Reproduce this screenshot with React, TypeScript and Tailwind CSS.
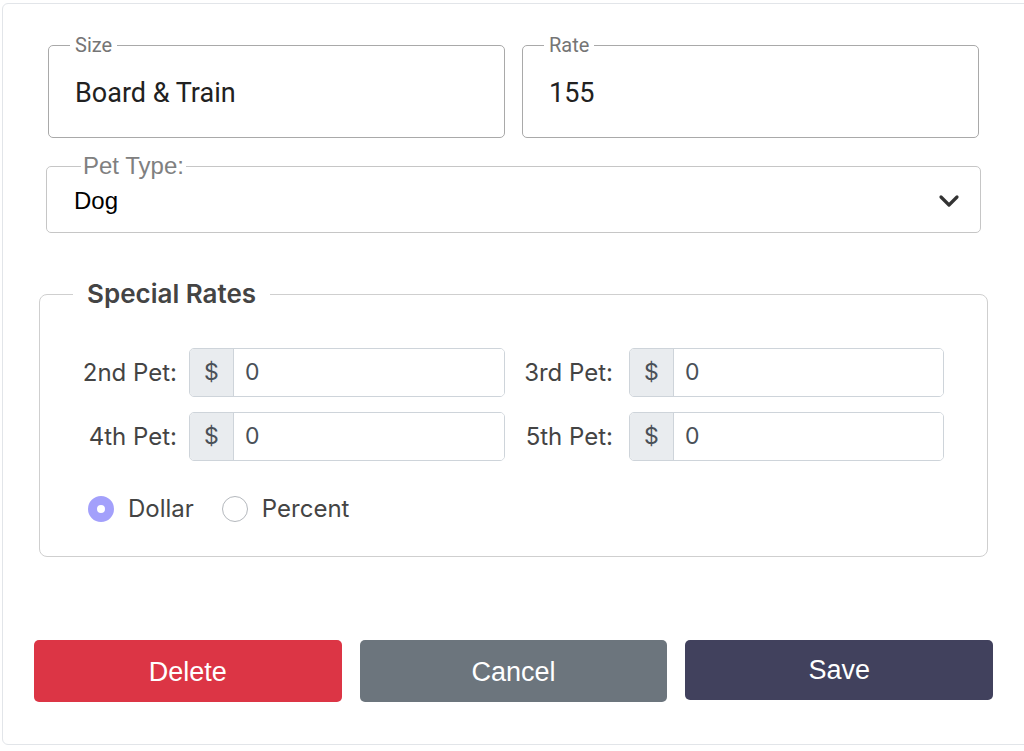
import React from 'react'

function PetRate({ label, value, gap }: { label: string; value: string; gap: string }) {
  return (
    <div className="flex items-center">
      <span className={`${gap} w-[96px] shrink-0 text-right text-[24px] text-[#444]`}>
        {label}
      </span>
      <div className="flex h-[49px] flex-1 overflow-hidden rounded-[5px] border border-[#ced4da]">
        <span className="flex w-[44px] items-center justify-center border-r border-[#ced4da] bg-[#e9ecef] text-[23px] text-[#495057]">
          $
        </span>
        <span className="flex flex-1 items-center bg-white pl-[11px] text-[23px] text-[#495057]">
          {value}
        </span>
      </div>
    </div>
  )
}

export default function App() {
  return (
    <div className="h-[751px] w-[1024px] overflow-hidden bg-white font-['Inter',sans-serif]">
      <div className="ml-[2px] mt-[3px] flex h-[742px] w-[1040px] flex-col items-start rounded-[6px] border border-[#e2e5e9] bg-white">
        <div className="ml-[45px] mt-[31px] flex w-[931px] gap-[17px] font-['Roboto',sans-serif]">
          <fieldset className="flex-1 rounded-[5px] border border-[#a9a9a9] px-[26px]">
            <legend className="-ml-[5px] px-[5px] text-[20px] leading-[20px] text-[#757575]">
              Size
            </legend>
            <div className="pb-[30px] pt-[24px] text-[27px] leading-[28px] text-[#212121]">
              Board &amp; Train
            </div>
          </fieldset>
          <fieldset className="flex-1 rounded-[5px] border border-[#a9a9a9] px-[26px]">
            <legend className="-ml-[5px] px-[5px] text-[20px] leading-[20px] text-[#757575]">
              Rate
            </legend>
            <div className="pb-[30px] pt-[24px] text-[27px] leading-[28px] text-[#212121]">
              155
            </div>
          </fieldset>
        </div>

        <fieldset className="ml-[43px] mt-[16px] w-[935px] rounded-[5px] border border-[#c6c6c6] pl-[27px] pr-[20px] font-['Liberation_Sans',sans-serif]">
          <legend className="ml-[7px] px-[2px] text-[24px] leading-[24px] text-[#808080]">
            Pet Type:
          </legend>
          <div className="flex items-center justify-between pb-[18px] pt-[10px]">
            <span className="text-[24px] leading-[26px] text-black">Dog</span>
            <svg width="22" height="14" viewBox="0 0 22 14" className="text-[#333]">
              <polyline
                points="3,3 11,11 19,3"
                fill="none"
                stroke="currentColor"
                strokeWidth="3.2"
                strokeLinecap="round"
                strokeLinejoin="round"
              />
            </svg>
          </div>
        </fieldset>

        <fieldset className="ml-[36px] mt-[46px] w-[949px] rounded-[8px] border border-[#cfcfcf] pl-[41px] pr-[43px]">
          <legend className="-ml-[8px] px-[14px] text-[26px] font-semibold leading-[30px] text-[#444]">
            Special Rates
          </legend>
          <div className="mt-[39px] grid grid-cols-[424px_1fr] gap-x-[12px] gap-y-[15px]">
            <PetRate label="2nd Pet:" value="0" gap="mr-[12px]" />
            <PetRate label="3rd Pet:" value="0" gap="mr-[16px]" />
            <PetRate label="4th Pet:" value="0" gap="mr-[12px]" />
            <PetRate label="5th Pet:" value="0" gap="mr-[16px]" />
          </div>
          <div className="mb-[34px] ml-[7px] mt-[35px] flex items-center text-[24px] leading-[26px] text-[#444]">
            <span className="h-[26px] w-[26px] rounded-full border-[9px] border-[#a3a0fb] bg-white" />
            <span className="ml-[14px]">Dollar</span>
            <span className="ml-[28px] h-[26px] w-[26px] rounded-full border-[1.5px] border-[#b4b8bd] bg-white" />
            <span className="ml-[14px]">Percent</span>
          </div>
        </fieldset>

        <div className="ml-[31px] mt-[83px] flex w-[959px] items-start gap-[18px] font-['Liberation_Sans',sans-serif] text-[27px] text-white">
          <button className="flex h-[62px] flex-1 items-center justify-center rounded-[5px] bg-[#dc3545] pt-[3px]">
            Delete
          </button>
          <button className="flex h-[62px] flex-1 items-center justify-center rounded-[5px] bg-[#6c757d] pt-[3px]">
            Cancel
          </button>
          <button className="flex h-[60px] flex-1 items-center justify-center rounded-[5px] bg-[#41415d] pt-[1px]">
            Save
          </button>
        </div>
      </div>
    </div>
  )
}
